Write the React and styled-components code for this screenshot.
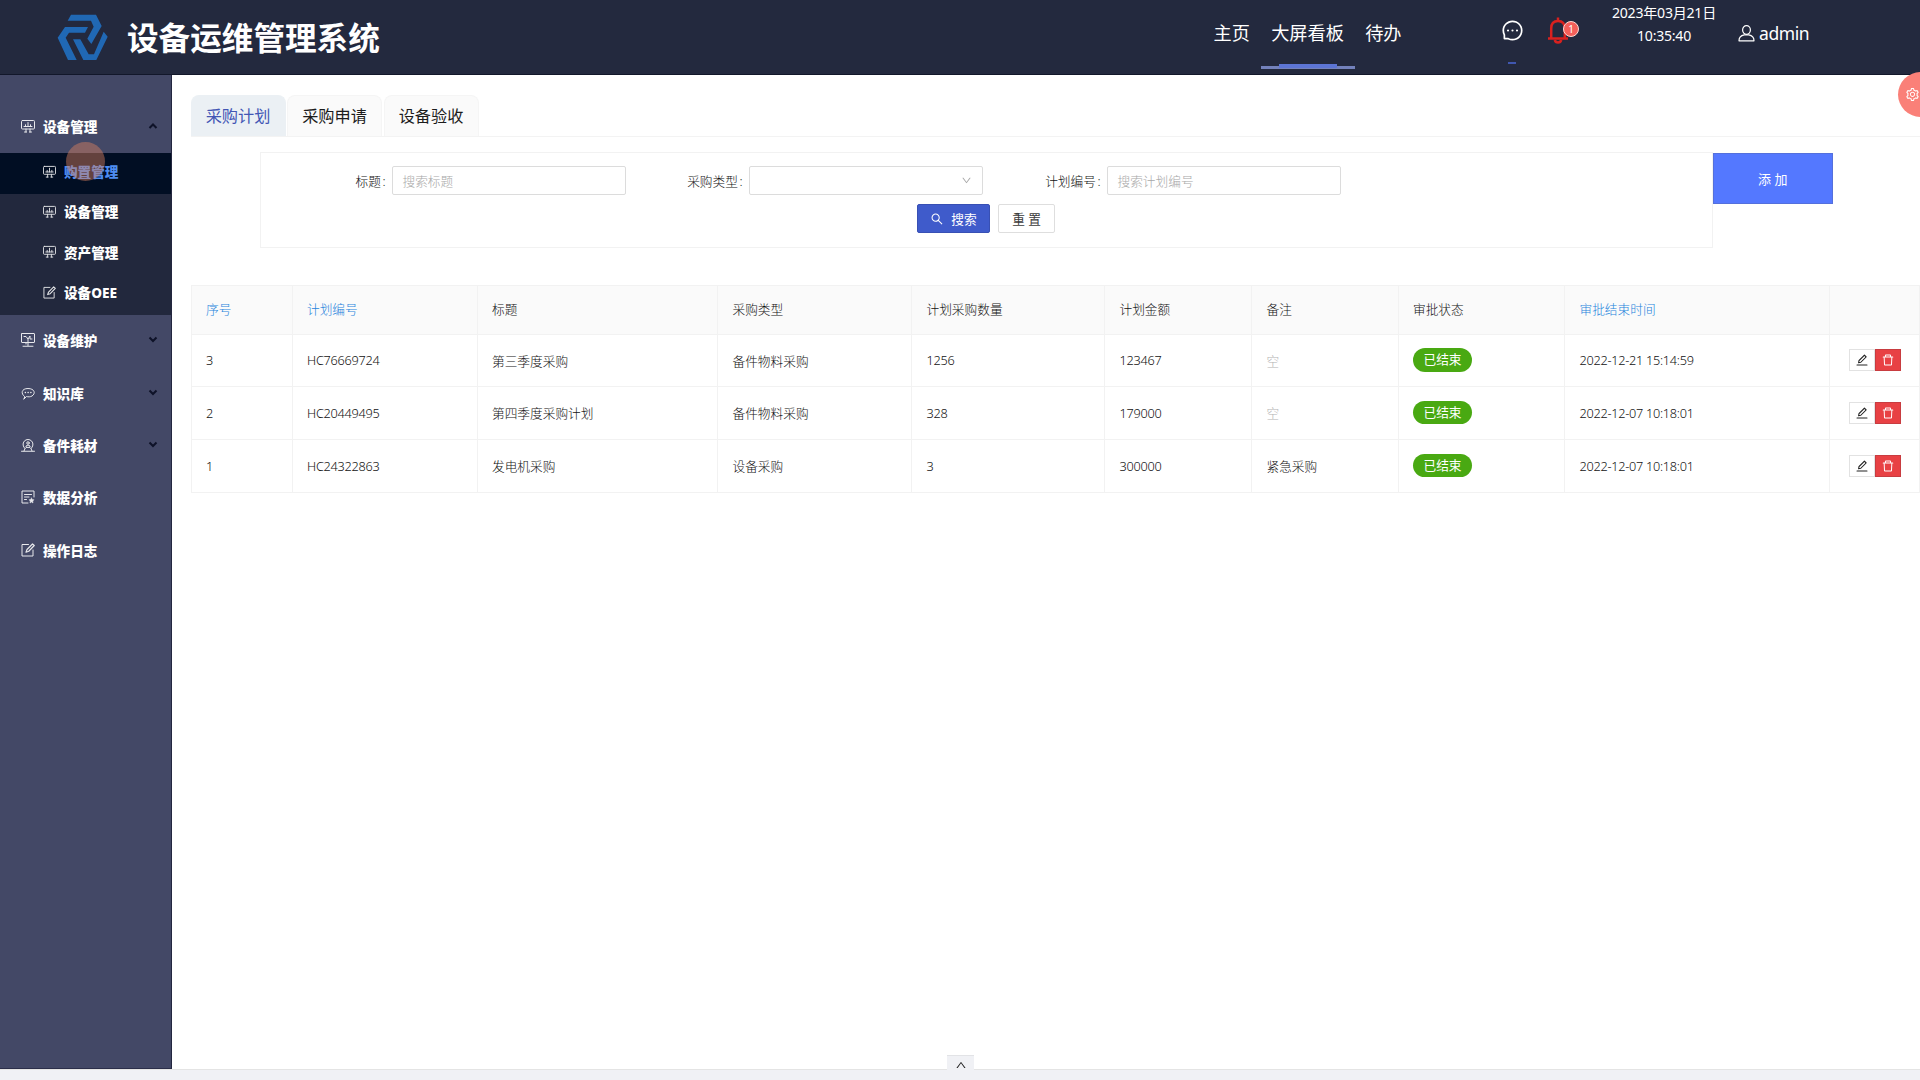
import React from "react";
import styled, { createGlobalStyle, css } from "styled-components";
import {
  AiOutlineSearch,
  AiOutlineEdit,
  AiOutlineDelete,
  AiOutlineMessage,
  AiOutlineSetting,
  AiOutlineDown,
  AiOutlineUp,
} from "react-icons/ai";

const Global = createGlobalStyle`
  * { box-sizing: border-box; }
  html, body { margin: 0; padding: 0; }
  body {
    width: 1920px;
    height: 1080px;
    overflow: hidden;
    background: #fff;
    font-family: "Noto Sans", "Noto Sans CJK SC", sans-serif;
    font-size: 12.7px;
    color: #444;
  }
  svg { display: block; flex: none; }
`;

const Page = styled.div`
  position: relative;
  width: 1920px;
  height: 1080px;
  display: flex;
  flex-direction: column;
  overflow: hidden;
`;

const Header = styled.header`
  display: flex;
  flex: none;
  height: 75px;
  background: #23293e;
  border-bottom: 1px solid #12172a;
  color: #fff;
`;

const Brand = styled.div`
  display: flex;
  align-items: flex-start;
  width: 1203px;
  padding: 14px 0 0 57px;
  gap: 19px;
`;

const BrandName = styled.h1`
  margin: 0;
  font-family: "Noto Sans CJK SC", sans-serif;
  font-size: 31.6px;
  line-height: 44px;
  font-weight: 700;
  white-space: nowrap;
`;

const Nav = styled.nav`
  display: flex;
  width: 298px;
`;

const NavItem = styled.a`
  position: relative;
  display: flex;
  justify-content: center;
  height: 68.5px;
  padding: 20px 10.6px 0;
  font-size: 18.2px;
  line-height: 27px;
  white-space: nowrap;
  border-bottom: 3px solid ${(p) => (p.$active ? "#7381bb" : "transparent")};
  ${(p) =>
    p.$active &&
    css`
      &::after {
        content: "";
        position: absolute;
        left: 18px;
        right: 18px;
        bottom: -2px;
        height: 4px;
        background: #5c74d4;
      }
    `}
`;

const ChatButton = styled.div`
  display: flex;
  flex-direction: column;
  align-items: center;
  width: 22px;
  padding-top: 19px;
  font-size: 23px;
  &::after {
    content: "";
    width: 8px;
    height: 2px;
    margin-top: 19.5px;
    background: #4057b0;
  }
`;

const BellButton = styled.div`
  position: relative;
  margin-left: 25px;
  padding-top: 17px;
  width: 26px;
  color: #d9211f;
`;

const BellCount = styled.span`
  position: absolute;
  left: 15px;
  top: 20.5px;
  width: 16px;
  height: 16px;
  border-radius: 8px;
  border: 1px solid #ffd9d4;
  background: #f5605a;
  color: #fff;
  font-size: 10px;
  line-height: 14px;
  text-align: center;
`;

const Clock = styled.div`
  width: 130px;
  margin-left: 25px;
  margin-right: 9px;
  padding-top: 2px;
  text-align: center;
  font-size: 14.1px;
  line-height: 22.5px;
  letter-spacing: -0.25px;
  white-space: nowrap;
`;

const Account = styled.div`
  display: flex;
  align-items: center;
  gap: 4px;
  height: 66px;
  font-size: 17.5px;
  letter-spacing: -0.4px;
`;

const Body = styled.div`
  display: flex;
  flex: none;
  height: 994px;
`;

const Side = styled.aside`
  width: 172px;
  flex: none;
  padding-top: 26px;
  background: #434866;
  border-right: 1px solid #23263f;
  border-bottom: 1px solid #2b2e49;
  color: #fff;
`;

const MenuItem = styled.div`
  display: flex;
  align-items: center;
  height: 52.4px;
  padding: 0 13.5px 2.6px 21px;
  font-size: 13.6px;
  font-weight: 800;
  white-space: nowrap;
`;

const MenuText = styled.span`
  flex: 1;
  padding-left: 8px;
`;

const SubMenu = styled.div`
  height: 162px;
  background: #22283d;
`;

const SubItem = styled(MenuItem)`
  height: 40.4px;
  padding: 0 0 5px 43px;
  background: ${(p) => (p.$active ? "#010e23" : "transparent")};
  color: ${(p) => (p.$active ? "#4d8cf0" : "#fff")};
  svg { color: #fff; }
`;

const ClickSpot = styled.div`
  position: absolute;
  left: 66px;
  top: 142px;
  width: 39px;
  height: 39px;
  border-radius: 50%;
  background: rgba(222, 130, 95, 0.45);
`;

const Main = styled.main`
  flex: 1;
  min-width: 0;
  padding: 20px 0 0 18.5px;
`;

const Tabs = styled.div`
  display: flex;
  gap: 1.5px;
  height: 42px;
  border-bottom: 1px solid #f3f3f3;
`;

const Tab = styled.div`
  width: 95px;
  height: 41px;
  border-radius: 8px 8px 0 0;
  border: 1px solid ${(p) => (p.$active ? "#ebf0f4" : "#f5f5f5")};
  border-bottom: 0;
  background: ${(p) => (p.$active ? "#ebf0f4" : "#fafafa")};
  color: ${(p) => (p.$active ? "#4256b4" : "#1c1c1c")};
  font-size: 16.2px;
  line-height: 41px;
  text-align: center;
`;

const SearchRow = styled.div`
  display: flex;
  align-items: flex-start;
  margin-top: 15px;
  padding-left: 69px;
  height: 132.5px;
`;

const SearchCard = styled.form`
  width: 1453px;
  height: 96px;
  border: 1px solid #f2f2f2;
  display: flex;
  flex-direction: column;
`;

const Fields = styled.div`
  display: flex;
  gap: 9px;
  padding: 13px 0 0 82px;
`;

const Field = styled.label`
  display: flex;
  align-items: center;
  justify-content: flex-end;
  width: ${(p) => p.$w}px;
  white-space: nowrap;
  font-weight: 300;
  color: #111;
`;

const Colon = styled.span`
  margin: 0 6.5px 0 1.5px;
`;

const Control = styled.span`
  display: flex;
  align-items: center;
  justify-content: ${(p) => (p.$select ? "flex-end" : "flex-start")};
  width: 233.5px;
  height: 29px;
  padding: 0 9.5px;
  border: 1px solid #dcdcdc;
  border-radius: 2px;
  color: #a8a8a8;
`;

const Actions = styled.div`
  display: flex;
  gap: 8px;
  padding: 9px 0 0 656.5px;
`;

const Button = styled.button`
  display: flex;
  align-items: center;
  justify-content: center;
  gap: 7px;
  width: ${(p) => p.$w}px;
  height: 29px;
  padding: 0;
  border-radius: 2px;
  border: 1px solid ${(p) => (p.$primary ? "#3850b4" : "#dedede")};
  background: ${(p) => (p.$primary ? "#3f5bcb" : "#fff")};
  color: ${(p) => (p.$primary ? "#fff" : "#3c3c3c")};
  font: inherit;
  svg { font-size: 14px; }
`;

const AddButton = styled.button`
  width: 120.5px;
  height: 51.5px;
  margin-top: 0.5px;
  padding: 0;
  border: 1px solid #5470dc;
  background: #5478ff;
  color: #fff;
  font: inherit;
  font-size: 13px;
`;

const Grid = styled.div`
  display: grid;
  grid-template-columns: 101px 185px 240.5px 194px 193px 147px 146.5px 166.5px 265px 90px;
  grid-template-rows: 49px 52px 53px 53px;
  border-top: 1px solid #f2f2f2;
  border-left: 1px solid #f2f2f2;
  font-weight: 300;
`;

const Cell = styled.div`
  display: flex;
  align-items: center;
  padding-left: ${(p) => (p.$tools ? 18.5 : 14.5)}px;
  padding-bottom: ${(p) => (p.$head ? 2 : 0)}px;
  border-right: 1px solid #f2f2f2;
  border-bottom: 1px solid #f2f2f2;
  white-space: nowrap;
  background: ${(p) => (p.$head ? "#fafafa" : "#fff")};
  color: ${(p) => (p.$link ? "#1f84dc" : p.$dim ? "#b4b4b4" : "#111")};
  letter-spacing: ${(p) => (p.$num ? "-0.26px" : "0")};
`;

const Pill = styled.span`
  width: 59px;
  height: 23.5px;
  border-radius: 12px;
  background: #49a912;
  color: #fff;
  font-weight: 400;
  line-height: 23px;
  text-align: center;
`;

const Tool = styled.span`
  display: flex;
  align-items: center;
  justify-content: center;
  width: 26px;
  height: 22px;
  font-size: 14px;
  border: 1px solid ${(p) => (p.$danger ? "#c83c40" : "#e2e2e2")};
  background: ${(p) => (p.$danger ? "#e84144" : "#fff")};
  color: ${(p) => (p.$danger ? "#fff" : "#222")};
`;

const Footer = styled.footer`
  position: relative;
  flex: 1;
  background: #f0f1f5;
  border-top: 1px solid #e4e4e4;
`;

const FooterHandle = styled.div`
  position: absolute;
  left: 947px;
  top: -15px;
  width: 27px;
  height: 16px;
  display: flex;
  align-items: flex-end;
  justify-content: center;
  background: #f0f1f5;
  border-top: 1px solid #e2e3e6;
  color: #222;
`;

const SettingsBubble = styled.div`
  position: absolute;
  left: 1898px;
  top: 72px;
  width: 46px;
  height: 45px;
  border-radius: 50%;
  display: flex;
  align-items: center;
  padding-left: 7px;
  background: #fa8078;
  color: #fff;
  font-size: 15px;
`;

const Logo = () => (
  <svg width="51" height="47" viewBox="171 42 153 141" fill="#2068b4">
    <path d="M213 44H288L305 78L274 132L262 116L281 80L273 62H203Z" />
    <path d="M195 81H264L255 98H207L197 113L230 180H204L173 113Z" />
    <path d="M219 118H241L266 163H282L311 95L323 110L289 180H250Z" />
  </svg>
);

const Line = ({ size = 14, children }) => (
  <svg
    width={size}
    height={size}
    viewBox="0 0 28 28"
    fill="none"
    stroke="currentColor"
    strokeWidth="2"
    strokeLinejoin="round"
    strokeLinecap="round"
    opacity="0.88"
  >
    {children}
  </svg>
);

const Monitor = ({ size }) => (
  <Line size={size}>
    <rect x="1" y="3" width="26" height="17" rx="2" />
    <path d="M6 15H22M14 7V15M9 11.500V15M19 11.500V15M10 20V26M18 20V26M7 26H11M17 26H21" />
  </Line>
);
const Form = ({ size }) => (
  <Line size={size}>
    <path d="M15 3H2V26H24V14" />
    <path d="M10 18.500L12 13L23 2L26.500 5L15.500 16.500Z" strokeWidth="2.400" />
  </Line>
);
const Repair = () => (
  <Line>
    <rect x="1" y="1" width="26" height="18" rx="1" />
    <path d="M6 7H10L14 12L18 6V12H22M14 12V25M4 26.500H24M10 19V22" />
  </Line>
);
const Bubble = () => (
  <Line>
    <path d="M7 21C-1 15 1 5 14 5S30 15 22 20C19 22 14 22 11 21L6 26Z" />
    <path d="M8.500 13H9M14 13H14.500M19.500 13H20" strokeWidth="2.600" />
  </Line>
);
const Spare = () => (
  <Line>
    <path d="M8 21A10 10 0 1 1 20 21M1 26.500H27M8 21L6 26M20 21L22 26M10 18V16L14 14L18 16V18Z" />
    <circle cx="14" cy="10" r="2.500" />
  </Line>
);
const Report = () => (
  <Line>
    <path d="M26 14V2H2V26H14M7 9H21M7 14H16M7 19H11" />
    <path d="M21 16L22.500 19L26 19.500L23.500 22L24 26L21 24L18 26L18.500 22L16 19.500L19.500 19Z" fill="currentColor" strokeWidth="1" />
  </Line>
);
const Person = () => (
  <svg width="17" height="17" viewBox="0 0 17 17" fill="none" stroke="currentColor" strokeWidth="1.2">
    <ellipse cx="8.500" cy="5" rx="3.900" ry="4.300" />
    <path d="M1 15.800C1 11.800 3.500 10.300 6.200 9.800H10.800C13.500 10.300 16 11.800 16 15.800Z" strokeLinejoin="round" />
  </svg>
);
const Bell = () => (
  <svg width="20" height="27" viewBox="0 0 20 27" fill="none" stroke="currentColor" strokeWidth="2.500">
    <path d="M0 21.600H20M3.200 21.800V11.500C3.200 6.500 6 4 10 4S16.800 6.500 16.800 11.500V21.800M10 0.500V4" />
    <path d="M6.800 23C7.200 25 8.500 25.500 10 25.500S12.800 25 13.200 23" />
  </svg>
);
const Chevron = ({ up }) => (
  <svg width="10" height="8" viewBox="0 0 10 8" fill="none" stroke="#0e1228" strokeWidth="2">
    <path d={up ? "M1.500 6L5 2.500L8.500 6" : "M1.500 1.500L5 5L8.500 1.500"} />
  </svg>
);

const SUB = [
  ["购置管理", Monitor, true],
  ["设备管理", Monitor],
  ["资产管理", Monitor],
  ["设备OEE", Form],
];
const MENU = [
  ["设备维护", Repair, true],
  ["知识库", Bubble, true],
  ["备件耗材", Spare, true],
  ["数据分析", Report],
  ["操作日志", Form],
];
const HEAD = ["序号", "计划编号", "标题", "采购类型", "计划采购数量", "计划金额", "备注", "审批状态", "审批结束时间", ""];
const LINKS = [0, 1, 8];
const NUMS = [0, 1, 4, 5, 8];
const ROWS = [
  ["3", "HC76669724", "第三季度采购", "备件物料采购", "1256", "123467", "空", "已结束", "2022-12-21 15:14:59"],
  ["2", "HC20449495", "第四季度采购计划", "备件物料采购", "328", "179000", "空", "已结束", "2022-12-07 10:18:01"],
  ["1", "HC24322863", "发电机采购", "设备采购", "3", "300000", "紧急采购", "已结束", "2022-12-07 10:18:01"],
];

export default function App() {
  return (
    <Page>
      <Global />
      <Header>
        <Brand>
          <Logo />
          <BrandName>设备运维管理系统</BrandName>
        </Brand>
        <Nav>
          <NavItem>主页</NavItem>
          <NavItem $active>大屏看板</NavItem>
          <NavItem>待办</NavItem>
        </Nav>
        <ChatButton>
          <AiOutlineMessage />
        </ChatButton>
        <BellButton>
          <Bell />
          <BellCount>1</BellCount>
        </BellButton>
        <Clock>
          2023年03月21日
          <br />
          10:35:40
        </Clock>
        <Account>
          <Person />
          admin
        </Account>
      </Header>
      <Body>
        <Side>
          <MenuItem>
            <Monitor size={14} />
            <MenuText>设备管理</MenuText>
            <Chevron up />
          </MenuItem>
          <SubMenu>
            {SUB.map(([name, Icon, active]) => (
              <SubItem key={name} $active={active}>
                <Icon size={13} />
                <MenuText>{name}</MenuText>
              </SubItem>
            ))}
          </SubMenu>
          {MENU.map(([name, Icon, arrow]) => (
            <MenuItem key={name}>
              <Icon size={14} />
              <MenuText>{name}</MenuText>
              {arrow && <Chevron />}
            </MenuItem>
          ))}
        </Side>
        <Main>
          <Tabs>
            <Tab $active>采购计划</Tab>
            <Tab>采购申请</Tab>
            <Tab>设备验收</Tab>
          </Tabs>
          <SearchRow>
            <SearchCard>
              <Fields>
                <Field $w={283}>
                  标题<Colon>:</Colon>
                  <Control>搜索标题</Control>
                </Field>
                <Field $w={348}>
                  采购类型<Colon>:</Colon>
                  <Control $select>
                    <AiOutlineDown size={11} />
                  </Control>
                </Field>
                <Field $w={349}>
                  计划编号<Colon>:</Colon>
                  <Control>搜索计划编号</Control>
                </Field>
              </Fields>
              <Actions>
                <Button type="button" $primary $w={73}>
                  <AiOutlineSearch />
                  搜索
                </Button>
                <Button type="button" $w={57}>
                  重 置
                </Button>
              </Actions>
            </SearchCard>
            <AddButton type="button">添 加</AddButton>
          </SearchRow>
          <Grid>
            {HEAD.map((name, i) => (
              <Cell key={i} $head $link={LINKS.includes(i)}>
                {name}
              </Cell>
            ))}
            {ROWS.map((row) => (
              <React.Fragment key={row[0]}>
                {row.map((value, i) => (
                  <Cell key={i} $dim={value === "空"} $num={NUMS.includes(i)}>
                    {i === 7 ? <Pill>{value}</Pill> : value}
                  </Cell>
                ))}
                <Cell $tools>
                  <Tool>
                    <AiOutlineEdit />
                  </Tool>
                  <Tool $danger>
                    <AiOutlineDelete />
                  </Tool>
                </Cell>
              </React.Fragment>
            ))}
          </Grid>
        </Main>
      </Body>
      <Footer>
        <FooterHandle>
          <AiOutlineUp size={12} />
        </FooterHandle>
      </Footer>
      <ClickSpot />
      <SettingsBubble>
        <AiOutlineSetting />
      </SettingsBubble>
    </Page>
  );
}
